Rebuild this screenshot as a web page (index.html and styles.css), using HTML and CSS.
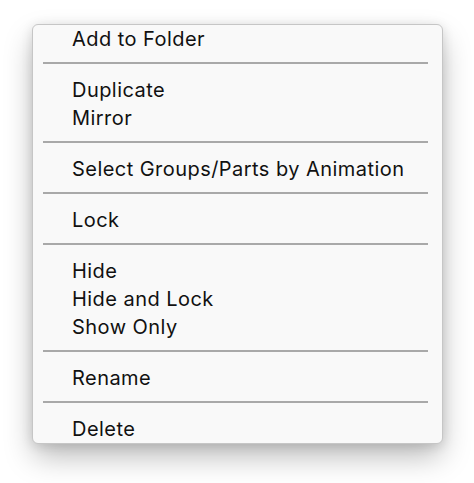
FILE: index.html
```html
<!DOCTYPE html>
<html>
<head>
<meta charset="utf-8">
<link rel="stylesheet" href="styles.css">
</head>
<body>
<div class="page">
  <div class="menu">
    <div class="item">Add to Folder</div>
    <div class="sep"></div>
    <div class="item">Duplicate</div>
    <div class="item">Mirror</div>
    <div class="sep"></div>
    <div class="item">Select Groups/Parts by Animation</div>
    <div class="sep"></div>
    <div class="item">Lock</div>
    <div class="sep"></div>
    <div class="item">Hide</div>
    <div class="item">Hide and Lock</div>
    <div class="item">Show Only</div>
    <div class="sep"></div>
    <div class="item">Rename</div>
    <div class="sep"></div>
    <div class="item">Delete</div>
  </div>
</div>
</body>
</html>
```
FILE: styles.css
```css
html, body {
  margin: 0;
  padding: 0;
  background: #ffffff;
}
.page {
  padding: 24px 0 40px 32px;
}
.menu {
  box-sizing: border-box;
  width: 411px;
  height: 420px;
  background: #f9f9f9;
  border: 1px solid #c6c6c6;
  border-radius: 6px;
  box-shadow: 0 14px 30px -2px rgba(0, 0, 0, 0.28), 0 2px 12px rgba(0, 0, 0, 0.12);
  overflow: hidden;
  font-family: Inter, "Liberation Sans", sans-serif;
  font-size: 20px;
  letter-spacing: 0.45px;
  color: #111111;
  display: flex;
  flex-direction: column;
}
.item {
  flex: none;
  height: 28px;
  line-height: 28px;
  padding-left: 39px;
  white-space: nowrap;
}
.sep {
  flex: none;
  height: 2px;
  margin: 9px 14px 12px 10px;
  background: #a9a9a9;
}
```
